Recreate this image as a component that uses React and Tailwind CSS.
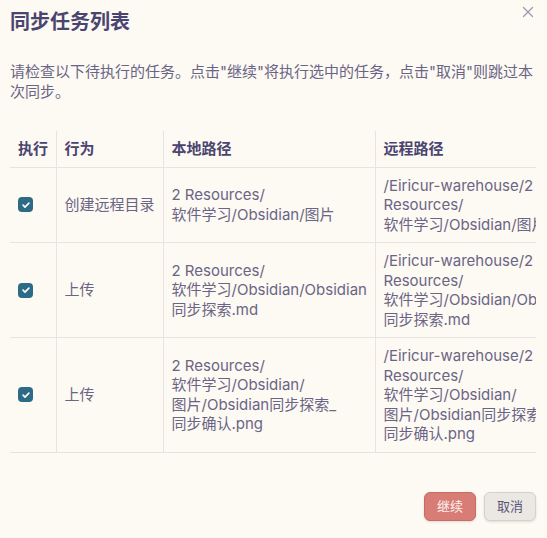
import { X } from "lucide-react";

const tasks = [
  {
    action: "创建远程目录",
    local: "2 Resources/软件学习/Obsidian/图片",
    remote: "/Eiricur-warehouse/2 Resources/软件学习/Obsidian/图片",
  },
  {
    action: "上传",
    local: "2 Resources/软件学习/Obsidian/Obsidian同步探索.md",
    remote: "/Eiricur-warehouse/2 Resources/软件学习/Obsidian/Obsidian同步探索.md",
  },
  {
    action: "上传",
    local: "2 Resources/软件学习/Obsidian/图片/Obsidian同步探索_同步确认.png",
    remote: "/Eiricur-warehouse/2 Resources/软件学习/Obsidian/图片/Obsidian同步探索_同步确认.png",
  },
];

function Check() {
  return (
    <span className="flex h-[15px] w-[15px] items-center justify-center rounded-[4px] bg-[#2d6a86]">
      <svg width="10" height="10" viewBox="0 0 24 24" fill="none" stroke="#ffffff" strokeWidth="4" strokeLinecap="round" strokeLinejoin="round">
        <path d="M5 12.5l4.5 4.5L19 7.5" />
      </svg>
    </span>
  );
}

export default function App() {
  return (
    <div
      className="relative min-h-[538px] w-full bg-[#fdf9f3] text-[#6a6585]"
      style={{ fontFamily: 'Inter, "Noto Sans CJK SC", sans-serif' }}
    >
      <button className="absolute right-[10px] top-[3px] text-[#9d98ad]">
        <X size={18} strokeWidth={1.7} />
      </button>

      <div className="pl-[10px] pr-[11px] pt-[8px] pb-[18px]">
        <h2 className="text-[20px] font-bold leading-[28px] text-[#4a4570]">同步任务列表</h2>

        <p className="mt-[26px] text-[15px] leading-[20px]">
          请检查以下待执行的任务。点击"继续"将执行选中的任务，点击"取消"则跳过本次同步。
        </p>

        <div className="mt-[29px] overflow-hidden">
          <table className="w-[577px] table-fixed border-collapse text-left text-[15px] leading-[19.5px]">
            <colgroup>
              <col className="w-[46px]" />
              <col className="w-[107px]" />
              <col className="w-[212px]" />
              <col className="w-[212px]" />
            </colgroup>
            <thead>
              <tr className="border-b border-[#e8e3de] whitespace-nowrap">
                <th className="py-2 pl-2 pr-0 font-bold text-[#4a4570]">执行</th>
                <th className="border-l border-[#e8e3de] px-2 py-2 font-bold text-[#4a4570]">行为</th>
                <th className="border-l border-[#e8e3de] px-2 py-2 font-bold text-[#4a4570]">本地路径</th>
                <th className="border-l border-[#e8e3de] px-2 py-2 font-bold text-[#4a4570]">远程路径</th>
              </tr>
            </thead>
            <tbody>
              {tasks.map((t, i) => (
                <tr key={i} className="border-b border-[#e8e3de]">
                  <td className="px-2 py-2 align-middle">
                    <Check />
                  </td>
                  <td className="border-l border-[#e8e3de] px-2 py-2 align-middle">{t.action}</td>
                  <td className="border-l border-[#e8e3de] py-2 pl-2 pr-[5px] align-middle [word-break:keep-all] [overflow-wrap:anywhere]">
                    {t.local}
                  </td>
                  <td className="border-l border-[#e8e3de] py-2 pl-2 pr-[5px] align-middle [word-break:keep-all] [overflow-wrap:anywhere]">
                    {t.remote}
                  </td>
                </tr>
              ))}
            </tbody>
          </table>
        </div>

        <div className="mt-[39px] flex justify-end gap-2">
          <button className="rounded-[6px] border border-[#c96b64] bg-[#d87d76] px-3 py-[4px] text-[13px] leading-[19px] text-[#fff1ee] shadow-sm">
            继续
          </button>
          <button className="rounded-[6px] border border-[#d6d1cc] bg-[#ebe7e3] px-3 py-[4px] text-[13px] leading-[19px] text-[#5a5675] shadow-sm">
            取消
          </button>
        </div>
      </div>
    </div>
  );
}
